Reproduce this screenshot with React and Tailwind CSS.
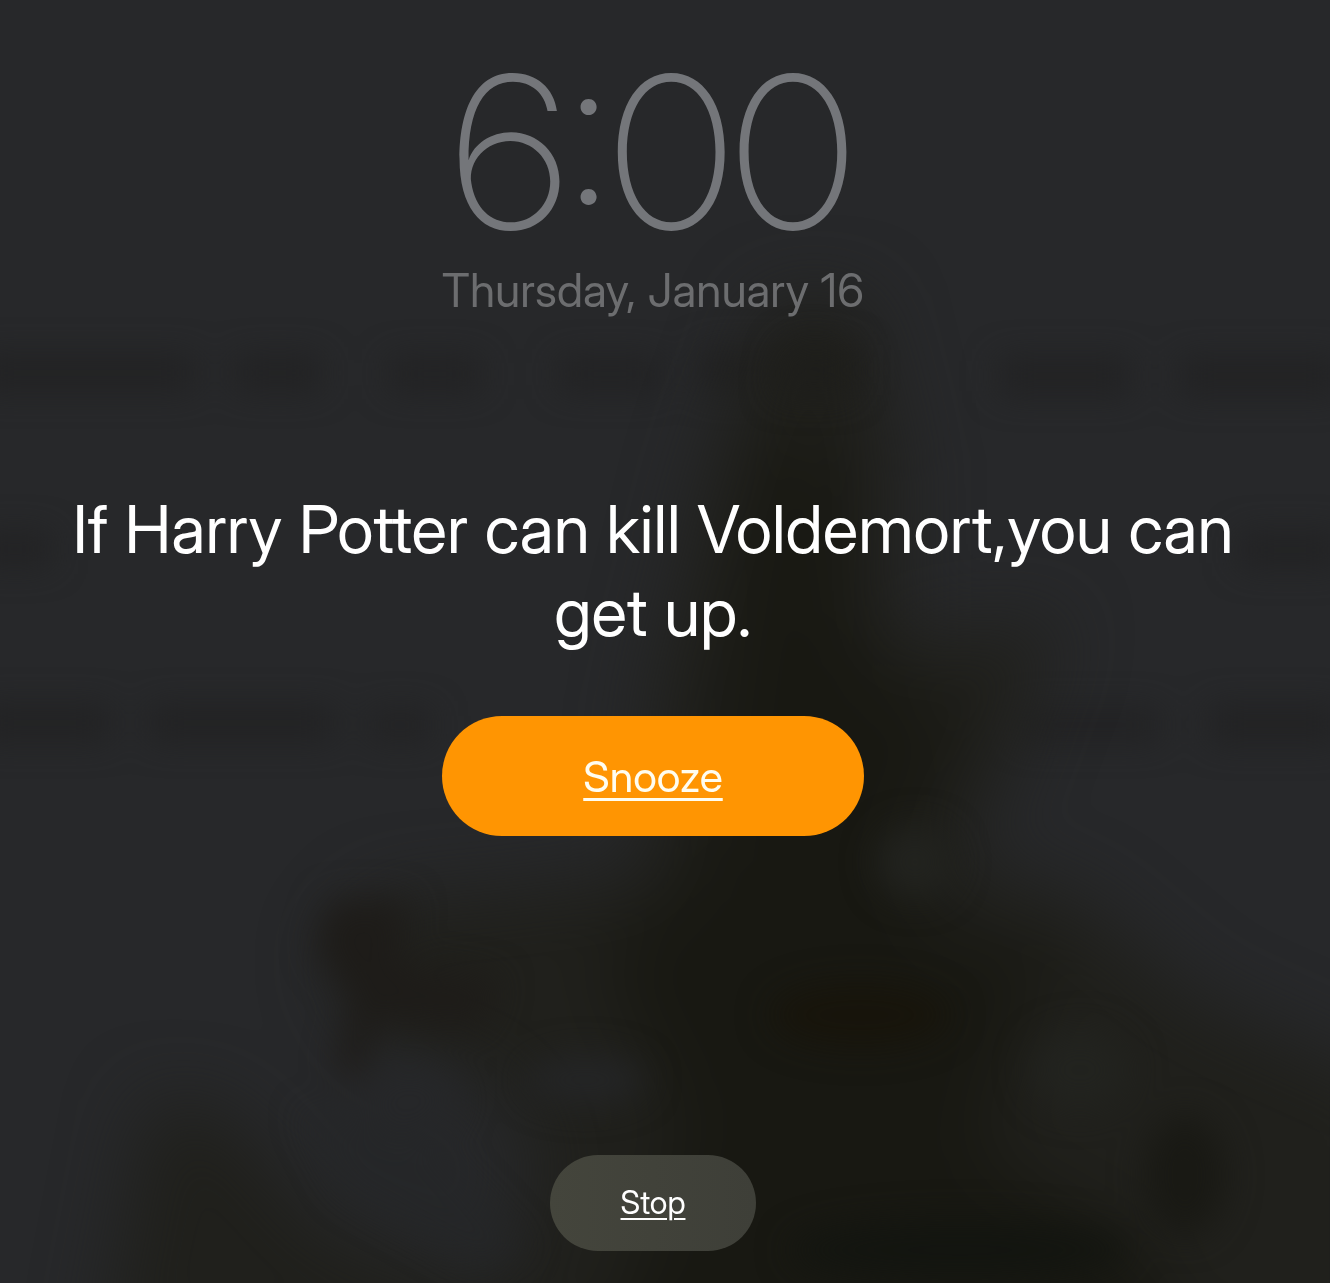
import React, { useState } from 'react';

// --- Alarm Data ---
const alarm = {
  time: '6:00',
  date: 'Thursday, January 16',
  label: 'If Harry Potter can kill Voldemort,you can get up.',
};

// --- Blurred Wallpaper ---
const Wallpaper = () => (
  <svg
    className="absolute inset-0 h-full w-full"
    viewBox="0 0 1330 1283"
    preserveAspectRatio="none"
    aria-hidden="true"
  >
    <defs>
      <filter id="soft" x="-20%" y="-20%" width="140%" height="140%" colorInterpolationFilters="sRGB">
        <feGaussianBlur stdDeviation="36" />
      </filter>
      <filter id="fine" x="-20%" y="-20%" width="140%" height="140%" colorInterpolationFilters="sRGB">
        <feGaussianBlur stdDeviation="17" />
      </filter>
    </defs>
    <rect width="1330" height="1283" fill="#27282a" />

    {/* Window blinds */}
    <g filter="url(#fine)" fill="#212122">
      <rect x="-20" y="358" width="215" height="30" />
      <rect x="235" y="358" width="85" height="30" />
      <rect x="390" y="360" width="90" height="28" />
      <rect x="560" y="360" width="100" height="28" />
      <rect x="700" y="350" width="160" height="40" />
      <rect x="1000" y="360" width="130" height="32" />
      <rect x="1180" y="360" width="160" height="32" />
      <rect x="-20" y="535" width="70" height="28" />
      <rect x="1240" y="535" width="100" height="30" />
      <rect x="-20" y="708" width="130" height="30" />
      <rect x="150" y="708" width="185" height="30" />
      <rect x="370" y="712" width="60" height="26" />
      <rect x="1020" y="712" width="140" height="26" />
      <rect x="1210" y="708" width="130" height="32" />
    </g>

    {/* Tree */}
    <g filter="url(#soft)">
      <path
        d="M770 300 L860 300 L900 460 L900 640 L1060 620 L1000 780 L960 860 L1080 900 L1200 1000 L1400 1090 L1400 1360 L100 1360 L150 1100 L220 1110 L330 1230 L500 1290 L540 1150 L490 1080 L380 1040 L330 960 L380 900 L500 890 L640 870 L650 700 L710 460 Z"
        fill="#20201c"
      />
      <path
        d="M760 440 L840 440 L850 620 L900 690 L970 710 L900 860 L950 940 L1060 940 L1020 1030 L980 1150 L1140 1240 L1200 1360 L600 1360 L680 1120 L600 960 L700 860 L730 640 Z"
        fill="#181812"
      />
    </g>
    <g filter="url(#fine)">
      <path d="M785 345 h65 v50 h-75 z" fill="#1e1e1b" />
      <path d="M330 900 L410 900 L400 965 L500 980 L480 1030 L380 1020 L355 1085 L335 1065 L355 1000 L315 950 Z" fill="#1e1c19" />
      <ellipse cx="860" cy="1015" rx="90" ry="32" fill="#171307" opacity="0.6" />
      <ellipse cx="915" cy="862" rx="38" ry="36" fill="#22231f" />
      <ellipse cx="585" cy="1080" rx="60" ry="24" fill="#242526" />
      <ellipse cx="410" cy="1100" rx="50" ry="36" fill="#262729" />
      <path d="M300 1110 L420 1130 L530 1250 L480 1270 L340 1190 Z" fill="#252628" opacity="0.6" />
      <ellipse cx="1185" cy="1175" rx="40" ry="60" fill="#191914" />
      <ellipse cx="1080" cy="1070" rx="50" ry="40" fill="#22231f" />
      <ellipse cx="960" cy="1250" rx="170" ry="30" fill="#131510" />
    </g>
  </svg>
);

// --- Clock ---
const Clock = ({ time, date }) => (
  <header className="flex flex-col items-center">
    <time className="text-[212px] leading-[208px] font-extralight text-[#74767a]">
      {time}
    </time>
    <p className="mt-2 text-[46px] leading-[52px] text-[#6c6d6f]">{date}</p>
  </header>
);

// --- Main Component ---
export default function App() {
  const [status, setStatus] = useState('ringing');

  return (
    <div className="relative min-h-screen overflow-hidden bg-[#27282a] font-['Inter_Display','Inter',sans-serif]">
      <Wallpaper />
      <main className="relative flex min-h-screen flex-col items-center pt-12 pr-12 pb-8 pl-6 text-center">
        <Clock time={alarm.time} date={alarm.date} />

        <h1 className="mt-43 text-[66px] leading-[83px] font-normal text-white">
          {alarm.label}
        </h1>

        <button
          type="button"
          onClick={() => setStatus('snoozed')}
          disabled={status !== 'ringing'}
          className="mt-[62px] h-30 w-[422px] rounded-full bg-[#ff9502] text-[43px] leading-[52px] text-[#fffdf0] underline decoration-3 underline-offset-6"
        >
          Snooze
        </button>

        <button
          type="button"
          onClick={() => setStatus('stopped')}
          className="mt-auto h-24 w-[206px] rounded-full bg-linear-to-r from-[#44453c] to-[#3e3f38] text-[32px] leading-10 text-white underline decoration-2 underline-offset-4"
        >
          Stop
        </button>
      </main>
    </div>
  );
}
